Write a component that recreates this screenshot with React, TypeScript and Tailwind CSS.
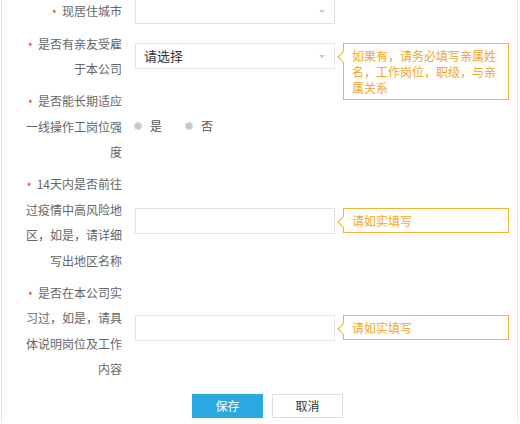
import type { ReactNode } from 'react'

const font = { fontFamily: '"Noto Sans CJK SC", "Noto Sans", sans-serif' }

function Label({ children, required = true }: { children: ReactNode; required?: boolean }) {
  return (
    <div className="w-[120px] shrink-0 pl-[22px] text-right text-[12px] leading-[25.5px] text-[#666]">
      {required && <span className="mr-[5px] align-[-2px] text-[11px] leading-none text-[#e4393c]">*</span>}
      {children}
    </div>
  )
}

function Select({ value }: { value?: string }) {
  return (
    <div className="flex h-[26px] w-[200px] items-center justify-between border border-[#e3e3e3] bg-white pl-[8px] pr-[9px]">
      <span className="text-[13px] text-[#333]">{value}</span>
      <span className="h-0 w-0 border-x-[3px] border-t-[3px] border-x-transparent border-t-[#c4c4c4]" />
    </div>
  )
}

function Tip({ children }: { children: ReactNode }) {
  return (
    <div className="absolute left-[208px] top-0 w-[166px] border border-[#f5b335] bg-white pl-[8px] pr-[6px] pb-[3px] pt-[4px] text-[12px] leading-[16px] text-[#f5a623]">
      <span className="absolute left-[-5px] top-[9px] size-[8px] rotate-45 border-b border-l border-[#f5b335] bg-white" />
      {children}
    </div>
  )
}

function Radio({ label }: { label: string }) {
  return (
    <label className="flex items-center gap-[8px] text-[12px] text-[#555]">
      <span className="size-[8px] rounded-full border border-[#d6d6d6] bg-[#c8c8c8]" />
      {label}
    </label>
  )
}

export default function App() {
  return (
    <div style={font} className="h-[424px] w-[520px] overflow-hidden bg-white">
      <div className="ml-[1px] h-full w-[517px] border-x border-[#e6e6e6]">
        <div className="-mt-[2px] flex flex-col gap-[6.5px]">
          <div className="flex items-center">
            <Label>现居住城市</Label>
            <div className="ml-[13px]">
              <Select />
            </div>
          </div>

          <div className="flex items-center">
            <Label>是否有亲友受雇于本公司</Label>
            <div className="relative ml-[13px]">
              <Select value="请选择" />
              <Tip>如果有，请务必填写亲属姓名，工作岗位，职级，与亲属关系</Tip>
            </div>
          </div>

          <div className="flex items-center">
            <Label>是否能长期适应一线操作工岗位强度</Label>
            <div className="ml-[12px] flex items-center gap-[23px]">
              <Radio label="是" />
              <Radio label="否" />
            </div>
          </div>

          <div className="flex items-center">
            <Label>14天内是否前往过疫情中高风险地区，如是，请详细写出地区名称</Label>
            <div className="relative ml-[13px] -mt-[3px]">
              <div className="h-[26px] w-[200px] border border-[#e3e3e3] bg-white" />
              <Tip>请如实填写</Tip>
            </div>
          </div>

          <div className="flex items-center">
            <Label>是否在本公司实习过，如是，请具体说明岗位及工作内容</Label>
            <div className="relative ml-[13px] -mt-[5px]">
              <div className="h-[26px] w-[200px] border border-[#e3e3e3] bg-white" />
              <Tip>请如实填写</Tip>
            </div>
          </div>
        </div>

        <div className="mt-[12px] flex gap-[9px] pl-[190px]">
          <button type="button" className="h-[24px] w-[71px] bg-[#2aa9e0] text-[12px] text-white">
            保存
          </button>
          <button type="button" className="h-[24px] w-[71px] border border-[#dcdcdc] bg-white text-[12px] text-[#333]">
            取消
          </button>
        </div>
      </div>
    </div>
  )
}
